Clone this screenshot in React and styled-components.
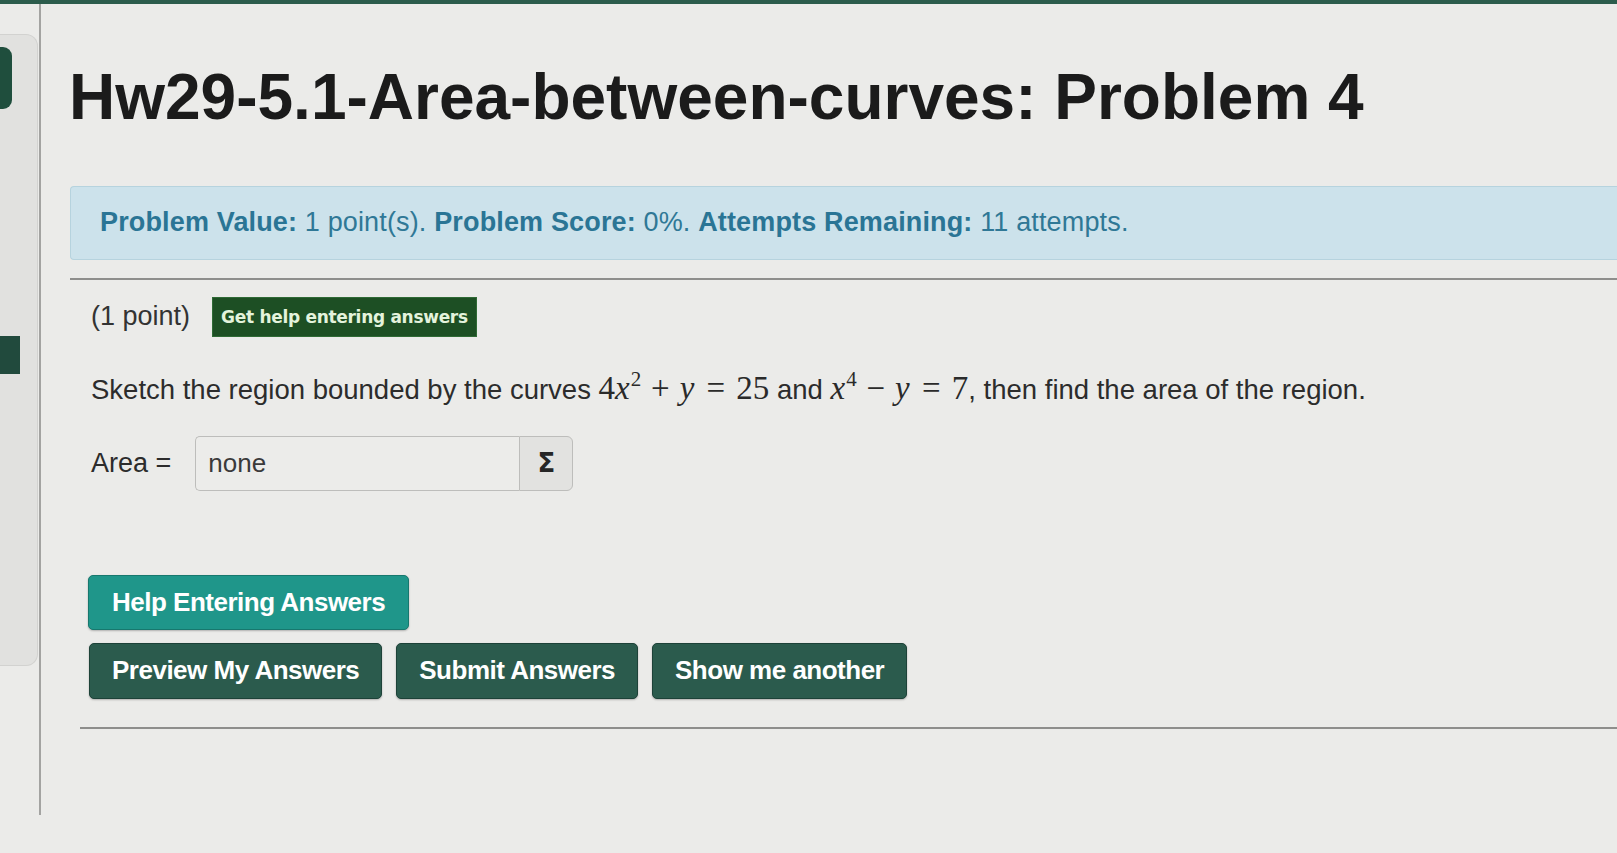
import React from 'react';
import styled, { createGlobalStyle } from 'styled-components';

const GlobalStyle = createGlobalStyle`
  html, body {
    margin: 0;
    padding: 0;
    background: #ebebe9;
    font-family: "Liberation Sans", Arial, Helvetica, sans-serif;
    color: #2a2a2a;
  }
`;

const TopStrip = styled.div`
  height: 4px;
  background: #2c5c4c;
`;

const Layout = styled.div`
  display: flex;
  align-items: flex-start;
  height: 849px;
  overflow: hidden;
`;

const Sidebar = styled.aside`
  width: 41px;
  height: 811px;
  flex-shrink: 0;
  border-right: 2px solid #a3a3a1;
  padding-top: 30px;
  box-sizing: border-box;
`;

const SidebarPanel = styled.div`
  width: 37px;
  height: 630px;
  background: #e1e1df;
  border: 1px solid #d2d2d0;
  border-left: none;
  border-radius: 0 12px 12px 0;
  display: flex;
  flex-direction: column;
  align-items: flex-start;
`;

const NavPill = styled.div`
  margin-top: 12px;
  width: 12px;
  height: 62px;
  background: #1f4e3d;
  border-radius: 0 9px 9px 0;
`;

const NavSquare = styled.div`
  margin-top: 227px;
  width: 20px;
  height: 38px;
  background: #214a3d;
`;

const Main = styled.main`
  flex: 1;
  padding-left: 29px;
  min-width: 0;
`;

const Title = styled.h1`
  margin: 55px 0 0 -1px;
  font-size: 64px;
  line-height: 1.2;
  font-weight: bold;
  color: #1b1b1b;
  white-space: nowrap;
`;

const InfoBar = styled.div`
  margin-top: 50px;
  height: 74px;
  display: flex;
  align-items: center;
  padding-left: 29px;
  background: #cce2eb;
  border: 1px solid #b6d3de;
  border-right: none;
  border-radius: 4px 0 0 4px;
  font-size: 27px;
  letter-spacing: 0.15px;
  color: #2f7896;
  white-space: nowrap;
  box-sizing: border-box;
`;

const Strong = styled.b`
  color: #2a7595;
`;

const Rule = styled.hr`
  margin: ${p => p.$top}px 0 0 ${p => p.$left || 0}px;
  border: none;
  border-top: 2px solid #8e8e8c;
  height: 0;
`;

const Body = styled.div`
  padding-left: 21px;
`;

const PointRow = styled.div`
  margin-top: 17px;
  display: flex;
  align-items: center;
  gap: 22px;
  font-size: 27px;
  color: #333;
`;

const HelpLink = styled.span`
  display: inline-flex;
  align-items: center;
  height: 40px;
  padding: 0 8px;
  box-sizing: border-box;
  background: #1d4f24;
  border: 1px solid #2f6a35;
  color: #e4f3dc;
  font-family: "DejaVu Sans", sans-serif;
  font-weight: bold;
  font-size: 17px;
  letter-spacing: -0.3px;
`;

const Statement = styled.p`
  margin: 34px 0 0;
  font-size: 27.5px;
  line-height: 34px;
  color: #2c2c2c;
  white-space: nowrap;
`;

const Math = styled.span`
  font-family: "Liberation Serif", "Times New Roman", serif;
  font-size: 33px;
  color: #2a2a2a;
`;

const Var = styled.i`
  font-family: "Liberation Serif", "Times New Roman", serif;
  margin-right: 1px;
`;

const Op = styled.span`
  margin: 0 ${p => (p.$rel ? 0.34 : 0.3)}em;
`;

const Sup = styled.sup`
  font-size: 21px;
  line-height: 0;
  vertical-align: 13px;
`;

const AnswerRow = styled.div`
  margin-top: 29px;
  display: flex;
  align-items: center;
  gap: 24px;
  font-size: 27px;
  color: #2c2c2c;
`;

const InputGroup = styled.div`
  display: flex;
  height: 55px;
`;

const AnswerInput = styled.div`
  width: 324px;
  box-sizing: border-box;
  display: flex;
  align-items: center;
  padding-left: 12px;
  background: #ececea;
  border: 1px solid #bdbdbb;
  border-right: none;
  border-radius: 5px 0 0 5px;
  font-size: 26px;
  color: #3a3a3a;
`;

const SigmaButton = styled.div`
  width: 54px;
  box-sizing: border-box;
  display: flex;
  align-items: center;
  justify-content: center;
  background: #e2e2e0;
  border: 1px solid #bdbdbb;
  border-radius: 0 6px 6px 0;
  font-family: "DejaVu Sans", sans-serif;
  font-weight: bold;
  font-size: 26px;
  color: #262626;
`;

const Button = styled.button`
  height: ${p => p.$h || 55}px;
  padding: 0 ${p => p.$pad || 22}px;
  border: 1px solid ${p => (p.$teal ? '#17786e' : '#1d4238')};
  border-radius: 5px;
  background: ${p => (p.$teal ? '#1f968a' : '#2b5b4d')};
  color: #fff;
  font-family: "Liberation Sans", Arial, sans-serif;
  font-weight: bold;
  font-size: 26px;
  letter-spacing: -0.5px;
  box-shadow: 0 1px 2px rgba(0, 0, 0, 0.25);
  cursor: pointer;
`;

const HelpButtonWrap = styled.div`
  margin-top: 84px;
  margin-left: -3px;
`;

const ButtonRow = styled.div`
  margin-top: 13px;
  margin-left: -2px;
  display: flex;
  gap: 14px;
`;

export default function App() {
  return (
    <>
      <GlobalStyle />
      <TopStrip />
      <Layout>
        <Sidebar>
          <SidebarPanel>
            <NavPill />
            <NavSquare />
          </SidebarPanel>
        </Sidebar>
        <Main>
          <Title>Hw29-5.1-Area-between-curves: Problem 4</Title>
          <InfoBar>
            <Strong>Problem Value:</Strong>&nbsp;1 point(s).&nbsp;
            <Strong>Problem Score:</Strong>&nbsp;0%.&nbsp;
            <Strong>Attempts Remaining:</Strong>&nbsp;11 attempts.
          </InfoBar>
          <Rule $top={18} />
          <Body>
            <PointRow>
              <span>(1 point)</span>
              <HelpLink>Get help entering answers</HelpLink>
            </PointRow>
            <Statement>
              Sketch the region bounded by the curves{' '}
              <Math>
                4<Var>x</Var>
                <Sup>2</Sup>
                <Op>+</Op>
                <Var>y</Var>
                <Op $rel>=</Op>25
              </Math>{' '}
              and{' '}
              <Math>
                <Var>x</Var>
                <Sup>4</Sup>
                <Op>−</Op>
                <Var>y</Var>
                <Op $rel>=</Op>7
              </Math>
              , then find the area of the region.
            </Statement>
            <AnswerRow>
              <span>Area =</span>
              <InputGroup>
                <AnswerInput>none</AnswerInput>
                <SigmaButton>Σ</SigmaButton>
              </InputGroup>
            </AnswerRow>
            <HelpButtonWrap>
              <Button $teal $pad={23}>Help Entering Answers</Button>
            </HelpButtonWrap>
            <ButtonRow>
              <Button $h={56}>Preview My Answers</Button>
              <Button $h={56}>Submit Answers</Button>
              <Button $h={56}>Show me another</Button>
            </ButtonRow>
          </Body>
          <Rule $top={28} $left={10} />
        </Main>
      </Layout>
    </>
  );
}
